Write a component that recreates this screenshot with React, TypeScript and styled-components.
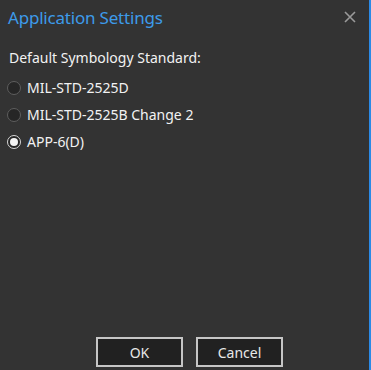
import React, { useState } from "react";
import styled, { createGlobalStyle } from "styled-components";

const GlobalStyle = createGlobalStyle`
  html, body {
    margin: 0;
    padding: 0;
    background: #333333;
  }
  * {
    box-sizing: border-box;
  }
`;

const Dialog = styled.div`
  width: 371px;
  height: 370px;
  background: #333333;
  border-right: 2px solid #2b8ae6;
  display: flex;
  flex-direction: column;
  font-family: "Noto Sans", "Open Sans", sans-serif;
  color: #f2f2f2;
`;

const Header = styled.div`
  height: 34px;
  display: flex;
  align-items: center;
  justify-content: space-between;
  padding: 0 12px 0 8px;
`;

const Title = styled.div`
  font-size: 17px;
  color: #3d9bea;
  letter-spacing: -0.2px;
`;

const CloseButton = styled.button`
  background: none;
  border: none;
  padding: 0;
  width: 14px;
  height: 14px;
  display: flex;
  align-items: center;
  justify-content: center;
  cursor: pointer;
`;

const Body = styled.div`
  flex: 1;
  padding: 14px 9px 0;
`;

const SectionLabel = styled.div`
  font-size: 14px;
  margin-bottom: 6px;
  height: 20px;
  line-height: 20px;
`;

const RadioRow = styled.label`
  display: flex;
  align-items: center;
  height: 27px;
  gap: 6px;
  font-size: 14px;
  cursor: pointer;
`;

const RadioCircle = styled.span<{ $checked: boolean }>`
  width: 14px;
  height: 14px;
  border-radius: 50%;
  border: 1px solid ${(p) => (p.$checked ? "#d8d8d8" : "#5e5e5e")};
  background: #262626;
  display: flex;
  align-items: center;
  justify-content: center;
  margin-left: -2px;

  &::after {
    content: "";
    width: 8px;
    height: 8px;
    border-radius: 50%;
    background: #f4f4f4;
    display: ${(p) => (p.$checked ? "block" : "none")};
  }
`;

const Footer = styled.div`
  display: flex;
  justify-content: flex-end;
  gap: 13px;
  padding: 0 86px 3px 0;
`;

const Button = styled.button`
  width: 87px;
  height: 30px;
  background: #212121;
  border: 2px solid #c6c6c6;
  color: #e8e8e8;
  font-family: "Noto Sans", "Open Sans", sans-serif;
  font-size: 14px;
  padding: 0;
  cursor: pointer;
`;

const options = ["MIL-STD-2525D", "MIL-STD-2525B Change 2", "APP-6(D)"];

export default function App() {
  const [selected, setSelected] = useState(2);
  return (
    <>
      <GlobalStyle />
      <Dialog>
        <Header>
          <Title>Application Settings</Title>
          <CloseButton aria-label="Close">
            <svg width="12" height="12" viewBox="0 0 12 12">
              <path d="M1 1 L11 11 M11 1 L1 11" stroke="#9a9a9a" strokeWidth="1.6" />
            </svg>
          </CloseButton>
        </Header>
        <Body>
          <SectionLabel>Default Symbology Standard:</SectionLabel>
          {options.map((o, i) => (
            <RadioRow key={o} onClick={() => setSelected(i)}>
              <RadioCircle $checked={selected === i} />
              {o}
            </RadioRow>
          ))}
        </Body>
        <Footer>
          <Button>OK</Button>
          <Button>Cancel</Button>
        </Footer>
      </Dialog>
    </>
  );
}
